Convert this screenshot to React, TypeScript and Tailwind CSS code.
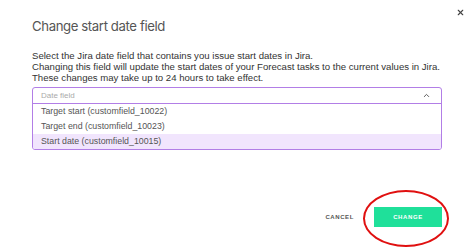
import { ChevronUp, X } from "lucide-react";

const options = [
  "Target start (customfield_10022)",
  "Target end (customfield_10023)",
  "Start date (customfield_10015)",
];

export default function App() {
  return (
    <div className="relative h-[248px] w-[474px] overflow-hidden bg-white font-['Liberation_Sans',Arial,sans-serif]">
      <button type="button" className="absolute right-[9px] top-[8px] text-[#444]">
        <X size={9} strokeWidth={3} />
      </button>

      <div className="px-[32px] pt-[16px]">
        <h1 className="font-['Inter',sans-serif] text-[13.2px] font-normal leading-[20px] tracking-[-0.4px] text-[#555]">
          Change start date field
        </h1>

        <div className="mt-[14px] text-[9.6px] leading-[11px] text-[#333]">
          <p>Select the Jira date field that contains you issue start dates in Jira.</p>
          <p>Changing this field will update the start dates of your Forecast tasks to the current values in Jira.</p>
          <p>These changes may take up to 24 hours to take effect.</p>
        </div>

        <div className="mt-[4px] w-[410px] overflow-hidden rounded-[3px] border border-[#b27ee6]">
          <div className="flex h-[16px] items-center justify-between border-b border-[#b27ee6] pl-[8px] pr-[10px]">
            <span className="text-[8px] text-[#aaa]">Date field</span>
            <ChevronUp size={9} strokeWidth={2.5} className="text-[#555]" />
          </div>
          {options.map((o, i) => (
            <div
              key={o}
              className={`flex h-[15px] items-center px-[8px] text-[8.8px] text-[#555] ${
                i === 2 ? "bg-[#f1e5fd]" : "bg-white"
              }`}
            >
              {o}
            </div>
          ))}
        </div>
      </div>

      <div className="absolute right-[32px] top-[207px] flex items-center gap-[20px]">
        <button type="button" className="text-[6px] font-bold tracking-[0.6px] text-[#555]">
          CANCEL
        </button>
        <button
          type="button"
          className="h-[20px] w-[68px] bg-[#1fe09a] text-[6px] font-bold tracking-[0.6px] text-white"
        >
          CHANGE
        </button>
      </div>

      <div className="absolute left-[363px] top-[190px] h-[57px] w-[86px] rounded-[50%] border-[2px] border-[#e01010]" />
    </div>
  );
}
